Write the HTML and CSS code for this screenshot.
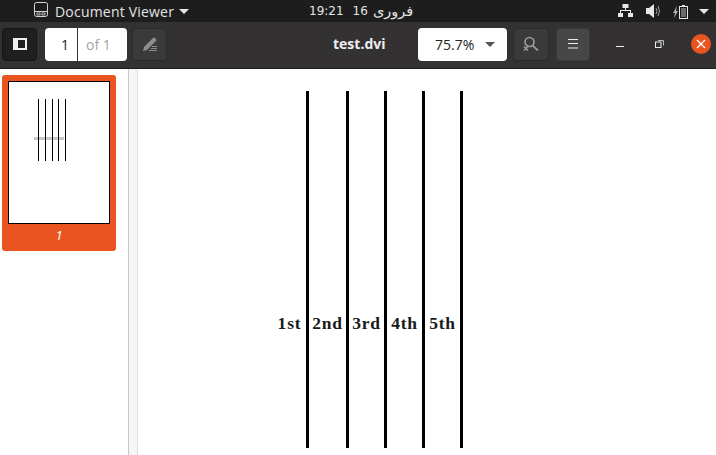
FILE: index.html
```html
<!DOCTYPE HTML>
<html lang="en">

<head>
  <meta charset="utf-8">
  <title>test.dvi</title>
  <link rel="stylesheet" href="styles.css">
</head>

<body>
  <div class="topbar">
    <div class="app_menu">
      <svg class="app_icon" width="14" height="16" viewBox="0 0 14 16">
        <path d="M2.500 .5h9a2 2 0 0 1 2 2v10a2 2 0 0 1-2 2h-9a2 2 0 0 1-2-2v-10a2 2 0 0 1 2-2z" fill="none" stroke="#d6d6d6" />
        <path d="M1 9.500h12" stroke="#d6d6d6" />
        <rect x="3" y="11" width="3" height="2" fill="none" stroke="#d6d6d6" stroke-width=".8" />
        <rect x="8" y="11" width="3" height="2" fill="none" stroke="#d6d6d6" stroke-width=".8" />
      </svg>
      <span class="app_name">Document Viewer</span>
      <i class="caret caret-light"></i>
    </div>
    <div class="clock"><span>19:21</span><span>16</span><span class="clock_month" lang="fa" dir="rtl">فروری</span></div>
    <div class="tray">
      <svg width="15" height="14" viewBox="0 0 15 14" fill="#e8e8e8">
        <rect x="4.500" y="0" width="6" height="4" />
        <rect x="0" y="9" width="5" height="4" />
        <rect x="10" y="9" width="5" height="4" />
        <path d="M7 4h1v2h5v3h-1v-2h-9v2h-1v-3h5z" />
      </svg>
      <svg width="14" height="14" viewBox="0 0 14 14" fill="#e8e8e8">
        <path d="M0 4h3l5-4v14l-5-4h-3z" />
        <path d="M10 4q2 3 0 6M12 2q3 5 0 10" fill="none" stroke="#9a9a9a" />
      </svg>
      <svg width="15" height="15" viewBox="0 0 15 15">
        <path d="M4 2l-4 7h2l-1 5 4-7h-2z" fill="#b0b0b0" />
        <rect x="6.500" y="2.500" width="8" height="12" fill="none" stroke="#e8e8e8" />
        <rect x="9" y="1" width="3" height="1" fill="#e8e8e8" />
        <rect x="8" y="4" width="5" height="9" fill="#6a6a6a" />
      </svg>
      <i class="caret caret-light"></i>
    </div>
  </div>

  <div class="toolbar">
    <div class="toolbar_left">
      <button type="button" class="tool_button tool_button-dark">
        <svg width="14" height="12" viewBox="0 0 14 12">
          <path d="M0 0h14v12h-14z M5 2v8h7v-8z" fill="#eee" fill-rule="evenodd" />
        </svg>
      </button>
      <div class="page_box">
        <span class="page_number">1</span>
        <span class="page_total">of 1</span>
      </div>
      <button type="button" class="tool_button">
        <svg width="16" height="16" viewBox="0 0 16 16">
          <path d="M1 15l1-4 9-9q1-1 2 0l1 1q1 1 0 2l-9 9z" fill="#8c8c8c" />
          <path d="M10 10.500h5M9 12.500h6M7 14.500h8" stroke="#8c8c8c" />
        </svg>
      </button>
    </div>
    <div class="doc_title">test.dvi</div>
    <div class="toolbar_right">
      <div class="zoom_box">
        <span>75.7%</span>
        <i class="caret caret-dark"></i>
      </div>
      <button type="button" class="tool_button tool_button-search">
        <svg width="16" height="16" viewBox="0 0 16 16">
          <circle cx="6.500" cy="6" r="4.500" fill="none" stroke="#9b9b9b" stroke-width="1.700" />
          <path d="M9.500 9.500l5.500 5" stroke="#9b9b9b" stroke-width="1.700" />
          <path d="M1 10.500l4 4M5 10.500l-4 4" stroke="#9b9b9b" stroke-width="1.600" />
        </svg>
      </button>
      <button type="button" class="tool_button tool_button-menu">
        <svg width="12" height="10" viewBox="0 0 12 10">
          <path d="M1 .5h10M1 4.500h10M1 9h10" stroke="#eee" />
        </svg>
      </button>
      <div class="window_buttons">
        <svg width="10" height="10" viewBox="0 0 10 10">
          <path d="M1 7.500h8" stroke="#eee" />
        </svg>
        <svg width="10" height="10" viewBox="0 0 10 10">
          <rect x=".5" y="3" width="5.500" height="5.500" fill="none" stroke="#eee" />
          <path d="M3 1.500h5.500v5" fill="none" stroke="#bbb" />
        </svg>
        <span class="close_button">
          <svg width="10" height="10" viewBox="0 0 10 10">
            <path d="M1 1l8 8M9 1l-8 8" stroke="#fff" stroke-width="1.300" />
          </svg>
        </span>
      </div>
    </div>
  </div>

  <div class="main">
    <div class="sidebar">
      <div class="thumb_card">
        <div class="thumb_page">
          <div class="thumb_lines">
            <div class="thumb_text"></div>
            <i></i><i></i><i></i><i></i><i></i>
          </div>
        </div>
        <div class="thumb_label">1</div>
      </div>
    </div>
    <div class="pane_handle"></div>
    <div class="document">
      <div class="col col-first">1st</div>
      <div class="col col-2">2nd</div>
      <div class="col col-3">3rd</div>
      <div class="col col-4">4th</div>
      <div class="col col-5">5th</div>
    </div>
  </div>
</body>

</html>
```

FILE: styles.css
```css
* {
  box-sizing: border-box;
}

html,
body {
  height: 100%;
}

body {
  margin: 0;
  display: flex;
  flex-direction: column;
  overflow: hidden;
  background-color: #fff;
  font-family: "Open Sans", "Noto Sans", sans-serif;
}

button {
  padding: 0;
  font: inherit;
}

/* Top panel */
.topbar {
  height: 22px;
  flex: none;
  display: flex;
  align-items: center;
  justify-content: space-between;
  position: relative;
  background-color: #1d1d1d;
  color: #e4e4e4;
  font-size: 14px;
}

.app_menu {
  display: flex;
  align-items: center;
  margin-left: 34px;
}

.app_icon {
  align-self: flex-start;
  margin-right: 7px;
}

.app_name {
  letter-spacing: .2px;
}

.clock {
  position: absolute;
  left: 309px;
  top: 0;
  height: 22px;
  display: flex;
  align-items: center;
  gap: 9px;
  font-family: "DejaVu Sans", sans-serif;
  font-size: 12px;
  white-space: nowrap;
}

.clock_month {
  margin-left: -4px;
  font-size: 14.500px;
}

.tray {
  display: flex;
  align-items: center;
  gap: 13px;
  margin-right: 7px;
}

.caret {
  display: block;
  width: 0;
  height: 0;
  border-left: 5px solid transparent;
  border-right: 5px solid transparent;
}

.caret-light {
  border-top: 5px solid #e8e8e8;
  margin-left: 5px;
}

.tray .caret-light {
  margin-left: -2px;
}

.caret-dark {
  border-top: 5px solid #555;
}

/* Header bar */
.toolbar {
  height: 47px;
  flex: none;
  display: flex;
  align-items: center;
  justify-content: space-between;
  position: relative;
  padding: 0 5px 2px 2px;
  background-color: #333131;
  border-bottom: 1px solid #1c1c1c;
}

.toolbar_left,
.toolbar_right {
  display: flex;
  align-items: center;
}

.tool_button {
  width: 35px;
  height: 33px;
  display: flex;
  align-items: center;
  justify-content: center;
  background-color: #3a3a3a;
  border: 1px solid #2a2a2a;
  border-radius: 4px;
}

.tool_button-dark {
  background-color: #1f1f1f;
  border-color: #151515;
}

.tool_button-search {
  margin-left: 6px;
  width: 36px;
}

.tool_button-menu {
  width: 34px;
  margin-left: 7px;
  background-color: #474747;
  border-color: #3a3a3a;
}

.page_box {
  width: 82px;
  height: 33px;
  margin: 0 5px 0 8px;
  display: flex;
  background-color: #fff;
  border-radius: 4px;
  font-size: 14px;
  line-height: 33px;
}

.page_number {
  width: 33px;
  padding-right: 8px;
  border-right: 1px solid #333;
  color: #222;
  text-align: right;
}

.page_total {
  padding-left: 8px;
  color: #a5a5a5;
}

.doc_title {
  position: absolute;
  left: 333px;
  top: 12px;
  color: #eee;
  font-size: 14px;
  font-weight: bold;
}

.zoom_box {
  width: 89px;
  height: 33px;
  display: flex;
  align-items: center;
  justify-content: space-between;
  padding: 0 12px 0 17px;
  background-color: #fff;
  border-radius: 4px;
  color: #222;
  font-size: 14px;
}

.window_buttons {
  display: flex;
  align-items: center;
  margin-left: 25px;
  gap: 30px;
}

.close_button {
  width: 20px;
  height: 20px;
  display: flex;
  align-items: center;
  justify-content: center;
  margin-left: -4px;
  background-color: #e95420;
  border-radius: 50%;
}

/* Sidebar and page */
.main {
  flex: 1;
  min-height: 0;
  display: flex;
}

.sidebar {
  width: 128px;
  flex: none;
  padding: 6px 0 0 2px;
  background-color: #fff;
}

.thumb_card {
  width: 114px;
  height: 176px;
  padding: 6px 6px 0;
  background-color: #e95420;
  border-radius: 3px;
}

.thumb_page {
  height: 143px;
  padding: 17px 0 0 29px;
  background-color: #fff;
  border: 1px solid #000;
}

.thumb_lines {
  width: 28px;
  height: 62px;
  display: flex;
  justify-content: space-between;
  position: relative;
}

.thumb_lines i {
  width: 1px;
  position: relative;
  background-color: #000;
}

.thumb_text {
  position: absolute;
  left: -4px;
  top: 38px;
  width: 30px;
  height: 3px;
  background-color: #c8c8c8;
}

.thumb_label {
  margin-top: 2px;
  color: #fff;
  font-size: 13px;
  font-style: italic;
  text-align: center;
}

.pane_handle {
  width: 10px;
  flex: none;
  background-color: #f6f6f6;
  border-left: 1px solid #c8c8c8;
  border-right: 1px solid #dcdcdc;
}

.document {
  flex: 1;
  display: flex;
  padding: 22px 0 7px 138px;
  background-color: #fff;
}

.col {
  padding-top: 222px;
  border-right: 3px solid #000;
  color: #1a1a1a;
  font-family: "Liberation Serif", serif;
  font-size: 17.500px;
  font-weight: bold;
  letter-spacing: .8px;
  line-height: 20px;
  text-align: center;
  white-space: nowrap;
}

.col-first {
  width: 33px;
  text-indent: -3px;
}

.col-2 {
  width: 40px;
}

.col-3,
.col-4,
.col-5 {
  width: 38px;
}
```
